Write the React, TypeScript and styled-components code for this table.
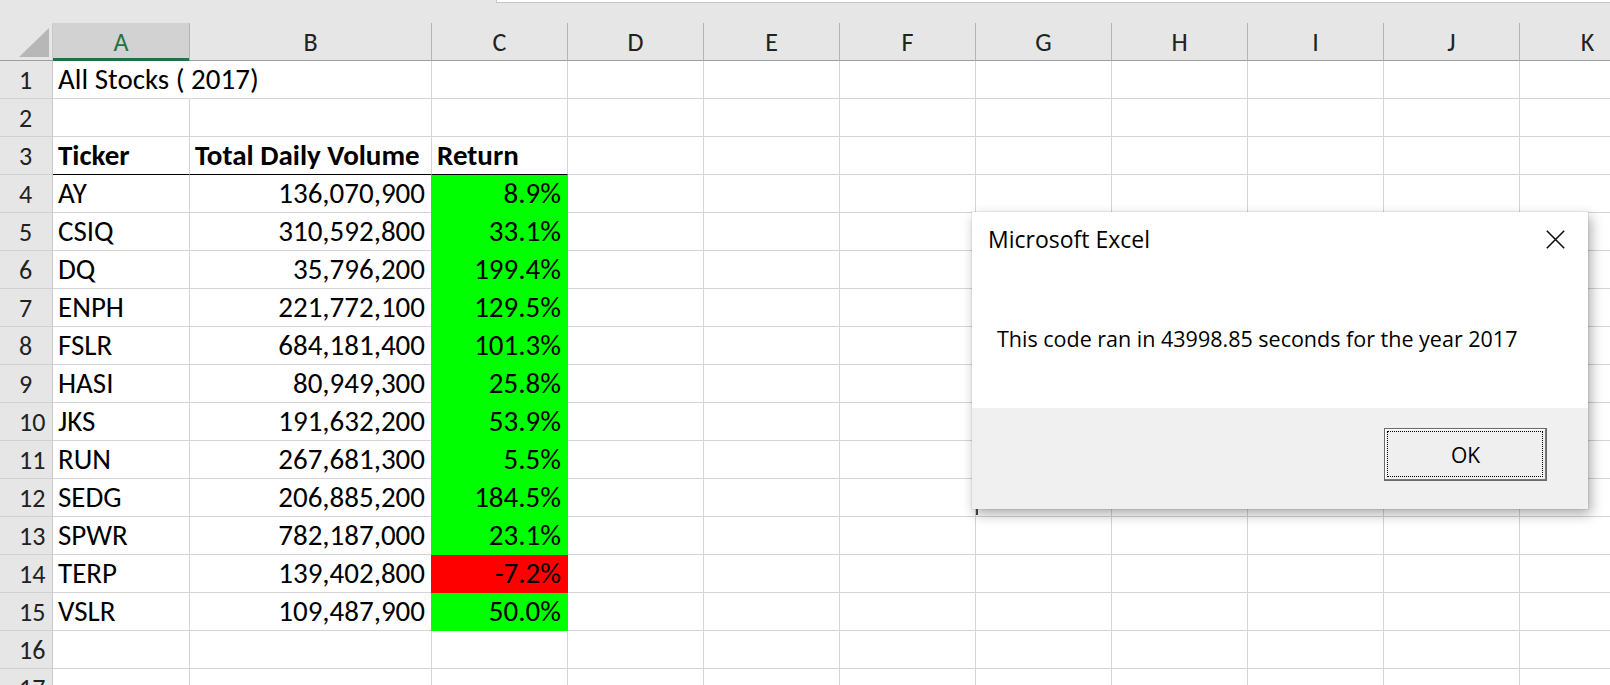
import React from 'react';
import styled, { createGlobalStyle } from 'styled-components';

const GlobalStyle = createGlobalStyle`
  html, body { margin: 0; padding: 0; background: #ffffff; }
  body { width: 1610px; height: 685px; overflow: hidden; }
  * { box-sizing: border-box; }
`;

const CELL_FONT = `Calibri, Carlito, Lato, "Liberation Sans", sans-serif`;
const UI_FONT = `"Segoe UI", "Open Sans", "Noto Sans", sans-serif`;
const GRID = '#d4d4d4';
const HEAD_BG = '#e6e6e6';
const HEAD_LINE = '#9e9e9e';

const Window = styled.div`
  position: relative;
  width: 1610px;
  height: 685px;
  overflow: hidden;
  background: ${HEAD_BG};
  display: flex;
  flex-direction: column;
`;

const TopStrip = styled.div`
  flex: none;
  height: 23px;
  display: flex;
  justify-content: flex-end;
  align-items: flex-start;
`;

const FormulaEdge = styled.div`
  width: 1114px;
  height: 3px;
  background: #ffffff;
  border-left: 1px solid #c6c6c6;
  border-bottom: 1px solid #c6c6c6;
`;

const Sheet = styled.div`
  flex: none;
  display: grid;
  grid-template-columns: 53px 137px 242px repeat(9, 136px);
  grid-auto-rows: 38px;
  background: #ffffff;
  font-family: ${CELL_FONT};
  font-size: 29px;
  line-height: 34px;
  color: #000000;
`;

const Corner = styled.div`
  position: relative;
  background: ${HEAD_BG};
  border-bottom: 1px solid ${HEAD_LINE};
  border-right: 1px solid #c8c8c8;
  &::after {
    content: '';
    position: absolute;
    right: 3px;
    bottom: 3px;
    width: 0;
    height: 0;
    border-left: 30px solid transparent;
    border-bottom: 29px solid #b7b7b7;
  }
`;

const ColHeader = styled.div<{ $selected?: boolean }>`
  display: flex;
  justify-content: center;
  align-items: flex-start;
  padding-top: 4px;
  font-size: 26px;
  line-height: 31px;
  background: ${(p) => (p.$selected ? '#d2d2d2' : HEAD_BG)};
  color: ${(p) => (p.$selected ? '#217346' : '#222222')};
  border-right: 1px solid #b4b4b4;
  border-bottom: 1px solid ${(p) => (p.$selected ? '#217346' : HEAD_LINE)};
  box-shadow: ${(p) => (p.$selected ? 'inset 0 -2px 0 #217346' : 'none')};
`;

const RowHeader = styled.div`
  display: flex;
  align-items: flex-start;
  padding: 4px 0 0 19px;
  font-size: 26px;
  line-height: 31px;
  white-space: nowrap;
  background: ${HEAD_BG};
  color: #222222;
  border-right: 1px solid #c8c8c8;
  border-bottom: 1px solid #d0d0d0;
`;

const Cell = styled.div<{
  $align?: 'left' | 'right';
  $bold?: boolean;
  $fill?: string;
  $spill?: boolean;
  $rule?: boolean;
}>`
  display: flex;
  align-items: flex-start;
  justify-content: ${(p) => (p.$align === 'right' ? 'flex-end' : 'flex-start')};
  padding: 1px 6px 0 5px;
  white-space: nowrap;
  overflow: visible;
  font-weight: ${(p) => (p.$bold ? 700 : 400)};
  background: ${(p) => p.$fill ?? 'transparent'};
  border-right: 1px solid ${(p) => (p.$fill ? p.$fill : p.$spill ? 'transparent' : GRID)};
  border-bottom: 1px solid ${(p) => (p.$rule ? '#000000' : p.$fill ? p.$fill : GRID)};
  box-shadow: ${(p) => (p.$fill ? `-1px 0 0 ${p.$fill}` : 'none')};
`;

const Dialog = styled.div`
  position: absolute;
  left: 972px;
  top: 212px;
  width: 616px;
  height: 297px;
  display: flex;
  flex-direction: column;
  background: #f0f0f0;
  box-shadow: 0 0 0 1px rgba(0, 0, 0, 0.06), 3px 5px 12px rgba(0, 0, 0, 0.33);
  font-family: ${UI_FONT};
  color: #000000;
  &::after {
    content: '';
    position: absolute;
    left: 4px;
    bottom: -6px;
    width: 2px;
    height: 6px;
    background: #3c3c3c;
  }
`;

const DialogMain = styled.div`
  flex: none;
  height: 196px;
  background: #ffffff;
  display: flex;
  flex-direction: column;
`;

const TitleBar = styled.div`
  height: 56px;
  display: flex;
  justify-content: space-between;
  align-items: flex-start;
  padding: 12px 23px 0 16px;
`;

const Title = styled.div`
  font-size: 23px;
  line-height: 31px;
`;

const CloseBox = styled.div`
  width: 19px;
  height: 19px;
  margin-top: 6px;
  display: flex;
`;

const Message = styled.div`
  padding: 56px 0 0 25px;
  font-size: 21.5px;
  line-height: 30px;
  white-space: nowrap;
`;

const Footer = styled.div`
  flex: 1;
  display: flex;
  justify-content: flex-end;
  align-items: flex-start;
  padding: 20px 41px 0 0;
`;

const OkButton = styled.button`
  position: relative;
  width: 163px;
  height: 53px;
  padding: 0;
  background: #efefef;
  border: 1px solid #6a6a6a;
  box-shadow: inset -1px -1px 0 #7a7a7a, inset 1px 1px 0 #ffffff;
  font-family: ${UI_FONT};
  font-size: 21px;
  color: #000000;
  &::after {
    content: '';
    position: absolute;
    inset: 2px 3px 3px 2px;
    border: 1px dotted #000000;
  }
`;

type CellData = {
  t?: string;
  align?: 'left' | 'right';
  bold?: boolean;
  fill?: string;
  spill?: boolean;
  rule?: boolean;
};

const GREEN = '#00ff00';
const RED = '#ff0000';

const stocks: [string, string, string][] = [
  ['AY', '136,070,900', '8.9%'],
  ['CSIQ', '310,592,800', '33.1%'],
  ['DQ', '35,796,200', '199.4%'],
  ['ENPH', '221,772,100', '129.5%'],
  ['FSLR', '684,181,400', '101.3%'],
  ['HASI', '80,949,300', '25.8%'],
  ['JKS', '191,632,200', '53.9%'],
  ['RUN', '267,681,300', '5.5%'],
  ['SEDG', '206,885,200', '184.5%'],
  ['SPWR', '782,187,000', '23.1%'],
  ['TERP', '139,402,800', '-7.2%'],
  ['VSLR', '109,487,900', '50.0%'],
];

const columns = ['A', 'B', 'C', 'D', 'E', 'F', 'G', 'H', 'I', 'J', 'K'];

const buildRows = (): CellData[][] => {
  const rows: CellData[][] = [];
  rows.push([{ t: 'All Stocks ( 2017)', spill: true }]);
  rows.push([]);
  rows.push([
    { t: 'Ticker', bold: true, rule: true },
    { t: 'Total Daily Volume', bold: true, rule: true },
    { t: 'Return', bold: true, rule: true },
  ]);
  stocks.forEach(([ticker, vol, ret]) => {
    rows.push([
      { t: ticker },
      { t: vol, align: 'right' },
      { t: ret, align: 'right', fill: ret.startsWith('-') ? RED : GREEN },
    ]);
  });
  rows.push([]);
  rows.push([]);
  return rows;
};

const CloseIcon = () => (
  <svg width="19" height="19" viewBox="0 0 19 19">
    <path d="M0.8 0.8 L18.2 18.2 M18.2 0.8 L0.8 18.2" stroke="#111" strokeWidth="1.6" fill="none" />
  </svg>
);

export default function App() {
  const rows = buildRows();
  return (
    <>
      <GlobalStyle />
      <Window>
        <TopStrip>
          <FormulaEdge />
        </TopStrip>
        <Sheet>
          <Corner />
          {columns.map((c) => (
            <ColHeader key={c} $selected={c === 'A'}>
              {c}
            </ColHeader>
          ))}
          {rows.map((row, r) => (
            <React.Fragment key={r}>
              <RowHeader>{r + 1}</RowHeader>
              {columns.map((c, ci) => {
                const d = row[ci] ?? {};
                return (
                  <Cell
                    key={c}
                    $align={d.align}
                    $bold={d.bold}
                    $fill={d.fill}
                    $spill={d.spill}
                    $rule={d.rule}
                  >
                    {d.t}
                  </Cell>
                );
              })}
            </React.Fragment>
          ))}
        </Sheet>
        <Dialog role="dialog" aria-label="Microsoft Excel">
          <DialogMain>
            <TitleBar>
              <Title>Microsoft Excel</Title>
              <CloseBox>
                <CloseIcon />
              </CloseBox>
            </TitleBar>
            <Message>This code ran in 43998.85 seconds for the year 2017</Message>
          </DialogMain>
          <Footer>
            <OkButton>OK</OkButton>
          </Footer>
        </Dialog>
      </Window>
    </>
  );
}
